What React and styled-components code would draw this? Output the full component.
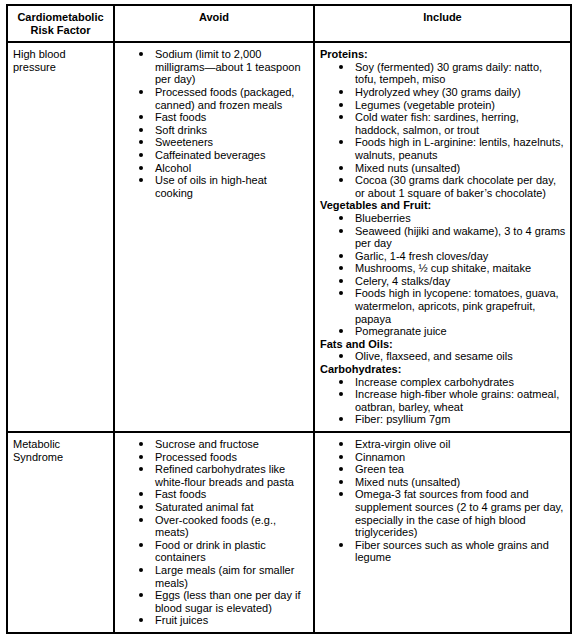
import React from "react";
import styled, { createGlobalStyle } from "styled-components";

const GlobalStyle = createGlobalStyle`
  html, body {
    margin: 0;
    padding: 0;
    background: #fff;
  }
  body {
    font-family: "Liberation Sans", Arial, sans-serif;
    font-size: 11px;
    color: #000;
  }
`;

const Page = styled.div`
  padding: 4px 0 0 6px;
`;

const Table = styled.div`
  display: grid;
  grid-template-columns: 107px 200px 257px;
  width: max-content;
  border-left: 2px solid #000;
  border-top: 2px solid #000;
`;

// $pr: right padding, tuned so each column wraps its lines where the source does
const Cell = styled.div`
  border-right: 2px solid #000;
  border-bottom: 2px solid #000;
  padding: 5px ${(p) => p.$pr ?? 5}px 5px 5px;
  line-height: 12.6px;
  text-align: ${(p) => (p.$head ? "center" : "left")};
  font-weight: ${(p) => (p.$head ? 700 : 400)};
`;

const Group = styled.div`
  font-weight: 700;
`;

const List = styled.ul`
  list-style: none;
  margin: 0;
  padding: 0 0 0 35px;
`;

const Item = styled.li`
  position: relative;
  &::before {
    content: "";
    position: absolute;
    left: -16px;
    top: 4px;
    width: 4px;
    height: 4px;
    border-radius: 50%;
    background: #000;
  }
`;

const rows = [
  {
    factor: "High blood pressure",
    avoid: [
      "Sodium (limit to 2,000 milligrams\u2014about 1 teaspoon per day)",
      "Processed foods (packaged, canned) and frozen meals",
      "Fast foods",
      "Soft drinks",
      "Sweeteners",
      "Caffeinated beverages",
      "Alcohol",
      "Use of oils in high-heat cooking",
    ],
    include: [
      {
        title: "Proteins:",
        items: [
          "Soy (fermented) 30 grams daily: natto, tofu, tempeh, miso",
          "Hydrolyzed whey (30 grams daily)",
          "Legumes (vegetable protein)",
          "Cold water fish: sardines, herring, haddock, salmon, or trout",
          "Foods high in L-arginine: lentils, hazelnuts, walnuts, peanuts",
          "Mixed nuts (unsalted)",
          "Cocoa (30 grams dark chocolate per day, or about 1 square of baker\u2019s chocolate)",
        ],
      },
      {
        title: "Vegetables and Fruit:",
        items: [
          "Blueberries",
          "Seaweed (hijiki and wakame), 3 to 4 grams per day",
          "Garlic, 1-4 fresh cloves/day",
          "Mushrooms, \u00bd cup shitake, maitake",
          "Celery, 4 stalks/day",
          "Foods high in lycopene: tomatoes, guava, watermelon, apricots, pink grapefruit, papaya",
          "Pomegranate juice",
        ],
      },
      {
        title: "Fats and Oils:",
        items: ["Olive, flaxseed, and sesame oils"],
      },
      {
        title: "Carbohydrates:",
        items: [
          "Increase complex carbohydrates",
          "Increase high-fiber whole grains: oatmeal, oatbran, barley, wheat",
          "Fiber: psyllium 7gm",
        ],
      },
    ],
  },
  {
    factor: "Metabolic Syndrome",
    avoid: [
      "Sucrose and fructose",
      "Processed foods",
      "Refined carbohydrates like white-flour breads and pasta",
      "Fast foods",
      "Saturated animal fat",
      "Over-cooked foods (e.g., meats)",
      "Food or drink in plastic containers",
      "Large meals (aim for smaller meals)",
      "Eggs (less than one per day if blood sugar is elevated)",
      "Fruit juices",
    ],
    include: [
      {
        items: [
          "Extra-virgin olive oil",
          "Cinnamon",
          "Green tea",
          "Mixed nuts (unsalted)",
          "Omega-3 fat sources from food and supplement sources (2 to 4 grams per day, especially in the case of high blood triglycerides)",
          "Fiber sources such as whole grains and legume",
        ],
      },
    ],
  },
];

export default function App() {
  return (
    <Page>
      <GlobalStyle />
      <Table>
        <Cell $head>Cardiometabolic Risk Factor</Cell>
        <Cell $head>Avoid</Cell>
        <Cell $head>Include</Cell>
        {rows.map((row) => (
          <React.Fragment key={row.factor}>
            <Cell>{row.factor}</Cell>
            <Cell $pr={8}>
              <List>
                {row.avoid.map((a) => (
                  <Item key={a}>{a}</Item>
                ))}
              </List>
            </Cell>
            <Cell $pr={4}>
              {row.include.map((g, i) => (
                <React.Fragment key={i}>
                  {g.title && <Group>{g.title}</Group>}
                  <List>
                    {g.items.map((it) => (
                      <Item key={it}>{it}</Item>
                    ))}
                  </List>
                </React.Fragment>
              ))}
            </Cell>
          </React.Fragment>
        ))}
      </Table>
    </Page>
  );
}
